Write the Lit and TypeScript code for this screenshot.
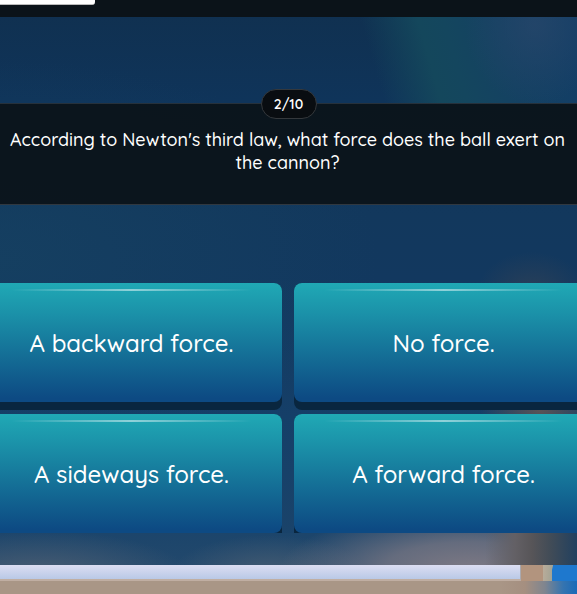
import { html, css, LitElement } from 'lit';
import { customElement, property } from 'lit/decorators.js';

@customElement('answer-tile')
export class AnswerTile extends LitElement {
  static styles = css`
    :host {
      display: block;
      height: 127px;
      border-radius: 8px;
      background: #09263f;
    }
    .face {
      height: 119px;
      border-radius: 8px;
      background: linear-gradient(#20a9b5, #1b92a9 25%, #0d4a83 97%);
      display: flex;
      flex-direction: column;
    }
    .shine {
      height: 2px;
      margin: 6px 30px 0;
      background: linear-gradient(90deg, transparent, rgba(255, 255, 255, 0.5), transparent);
    }
    .label {
      flex: 1;
      display: flex;
      align-items: center;
      justify-content: center;
      padding-bottom: 7px;
      color: #fff;
      font: 500 24px 'Quicksand', 'Lato', sans-serif;
    }
  `;

  @property() label = '';

  render() {
    return html`
      <div class="face">
        <div class="shine"></div>
        <div class="label">${this.label}</div>
      </div>
    `;
  }
}

@customElement('app-root')
export class AppRoot extends LitElement {
  static styles = css`
    :host {
      display: flex;
      flex-direction: column;
      height: 594px;
      overflow: hidden;
      color: #fff;
      font-family: 'Quicksand', 'Lato', sans-serif;
      background:
        radial-gradient(ellipse 70px 80px at 535px 25px, rgba(38, 70, 106, 0.8), transparent),
        linear-gradient(74deg, transparent 370px, #14475c 425px, #14465e 450px, #144162 500px, #133e66 566px) 0 0 / 100% 104px no-repeat,
        radial-gradient(ellipse 55px 40px at 532px 292px, rgba(50, 66, 86, 0.75), transparent),
        radial-gradient(ellipse 60px 30px at 540px 411px, rgba(96, 86, 84, 0.9), transparent),
        radial-gradient(ellipse 380px 200px at 0 260px, rgba(22, 66, 98, 0.7), transparent),
        linear-gradient(#10304f, #0f345a 17%, #12385d 36%, #12385f 47%, #153f68 70%, #1c456b 100%);
    }
    .header {
      height: 17px;
      background: #0b1319;
    }
    .field {
      box-sizing: border-box;
      width: 95px;
      height: 5px;
      background: #fff;
      border-bottom: 1px solid #bbb;
      border-radius: 0 0 3px 0;
    }
    .question {
      box-sizing: border-box;
      height: 102px;
      margin-top: 86px;
      display: flex;
      flex-direction: column;
      align-items: center;
      background: rgba(11, 19, 26, 0.94);
      border-top: 1px solid #26313b;
      border-bottom: 1px solid #303840;
    }
    .counter {
      box-sizing: border-box;
      width: 56px;
      height: 30px;
      margin-top: -15px;
      border: 1px solid #34383c;
      border-radius: 15px;
      background: #090d11;
      text-align: center;
      font-size: 14px;
      font-weight: 600;
      line-height: 28px;
    }
    .prompt {
      margin: 9px 2px 0 0;
      text-align: center;
      white-space: nowrap;
      font-size: 18px;
      font-weight: 500;
      line-height: 23px;
    }
    .answers {
      height: 250px;
      margin: 78px -16px 0 -19px;
      display: grid;
      grid-template-columns: 301px 299px;
      gap: 4px 12px;
      overflow: hidden;
      flex: none;
    }
    .blur {
      height: 32px;
      flex: none;
      background:
        linear-gradient(90deg, transparent 485px, #636065 515px, #575558 532px, #424c57 550px, #21405f 577px),
        radial-gradient(ellipse 190px 60px at 470px 36px, #7d7984, rgba(118, 117, 130, 0.8) 45%, transparent),
        radial-gradient(ellipse 150px 44px at 40px 42px, #4a5d72, transparent),
        radial-gradient(ellipse 100px 40px at 270px 42px, #465c72, transparent),
        linear-gradient(#1c456b, #22486c);
    }
    .board {
      height: 16px;
      flex: none;
      display: flex;
    }
    .paper {
      box-sizing: border-box;
      width: 521px;
      background: linear-gradient(#dcdef2, #b9c9e6);
      border-right: 1px solid #aaa9af;
      border-bottom: 2px solid #c0aea2;
    }
    .wood {
      width: 22px;
      background: #b2947e;
    }
    .edge {
      width: 10px;
      background: linear-gradient(93deg, #b9ac9a, #a3a394 88%, #1f78ce 90%);
    }
    .sea {
      flex: 1;
      background: #1e78ce;
    }
    .floor {
      flex: 1;
      background: linear-gradient(90deg, #a99686 500px, #a58f80 525px, #7f858f 545px, #3574b0 563px, #1a6ab8);
    }
  `;

  answers = ['A backward force.', 'No force.', 'A sideways force.', 'A forward force.'];

  render() {
    return html`
      <div class="header"><div class="field"></div></div>
      <div class="question">
        <div class="counter">2/10</div>
        <div class="prompt">
          According to Newton's third law, what force does the ball exert on<br />the cannon?
        </div>
      </div>
      <div class="answers">
        ${this.answers.map((a) => html`<answer-tile label=${a}></answer-tile>`)}
      </div>
      <div class="blur"></div>
      <div class="board">
        <div class="paper"></div>
        <div class="wood"></div>
        <div class="edge"></div>
        <div class="sea"></div>
      </div>
      <div class="floor"></div>
    `;
  }
}
